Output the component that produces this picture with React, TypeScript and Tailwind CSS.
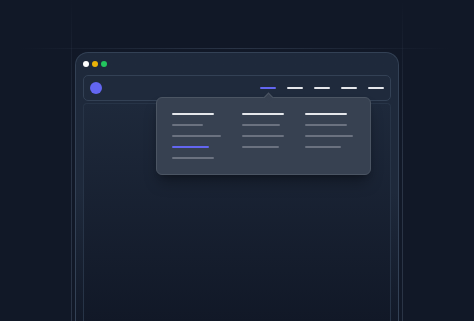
import React from "react";

const Line = ({ w, c }: { w: number; c: string }) => (
  <div className={`h-[2px] rounded-full ${c}`} style={{ width: w }} />
);

export default function App() {
  return (
    <div className="relative w-[474px] h-[321px] overflow-hidden bg-[#111827] font-['Inter',sans-serif]">
      {/* guide lines */}
      <div className="absolute left-[71px] top-0 h-full w-px bg-gradient-to-b from-transparent via-[#2a3446] to-[#2a3446]" />
      <div className="absolute left-[402px] top-0 h-full w-px bg-gradient-to-b from-transparent via-[#2a3446] to-[#2a3446]" />
      <div className="absolute left-[20px] top-[48px] h-px w-[430px] bg-gradient-to-r from-transparent via-[#2a3446] to-transparent" />

      <div className="relative ml-[75px] mt-[52px] w-[324px] h-[280px] rounded-t-[13px] border border-b-0 border-[#334155] bg-gradient-to-b from-[#1e293b] via-[#1e293b] to-[#111827] px-[7px]">
        {/* traffic lights */}
        <div className="flex items-center gap-[3px] h-[22px] pl-0">
          <div className="w-[6px] h-[6px] rounded-full bg-white" />
          <div className="w-[6px] h-[6px] rounded-full bg-[#eab308]" />
          <div className="w-[6px] h-[6px] rounded-full bg-[#22c55e]" />
        </div>
        {/* nav */}
        <div className="h-[26px] rounded-[5px] border border-[#334155] bg-[#1f2a3c] flex items-center px-[6px]">
          <div className="w-[12px] h-[12px] rounded-full bg-[#6366f1]" />
          <div className="ml-auto flex items-center gap-[11px] pr-0">
            <Line w={16} c="bg-[#6366f1]" />
            <Line w={16} c="bg-[#e5e7eb]" />
            <Line w={16} c="bg-[#e5e7eb]" />
            <Line w={16} c="bg-[#e5e7eb]" />
            <Line w={16} c="bg-[#e5e7eb]" />
          </div>
        </div>
        {/* content panel */}
        <div className="mt-[2px] h-[220px] rounded-t-[4px] border border-b-0 border-[#273447] bg-gradient-to-b from-[#1e293b] to-[#111827]" />

        {/* dropdown */}
        <div className="absolute left-[80px] top-[44px] w-[215px] h-[78px] rounded-[6px] border border-[#4b5563] bg-[#374151] shadow-lg shadow-black/30">
          <div className="absolute left-[108px] -top-[4px] w-[7px] h-[7px] rotate-45 border-l border-t border-[#4b5563] bg-[#374151]" />
          <div className="flex pl-[15px] pt-[15px]">
            <div className="w-[70px] flex flex-col gap-[9px]">
              <Line w={42} c="bg-[#e5e7eb]" />
              <Line w={31} c="bg-[#6b7280]" />
              <Line w={49} c="bg-[#6b7280]" />
              <Line w={37} c="bg-[#6366f1]" />
              <Line w={42} c="bg-[#6b7280]" />
            </div>
            <div className="w-[63px] flex flex-col gap-[9px]">
              <Line w={42} c="bg-[#e5e7eb]" />
              <Line w={38} c="bg-[#6b7280]" />
              <Line w={42} c="bg-[#6b7280]" />
              <Line w={37} c="bg-[#6b7280]" />
            </div>
            <div className="flex flex-col gap-[9px]">
              <Line w={42} c="bg-[#e5e7eb]" />
              <Line w={42} c="bg-[#6b7280]" />
              <Line w={48} c="bg-[#6b7280]" />
              <Line w={36} c="bg-[#6b7280]" />
            </div>
          </div>
        </div>
      </div>
    </div>
  );
}
